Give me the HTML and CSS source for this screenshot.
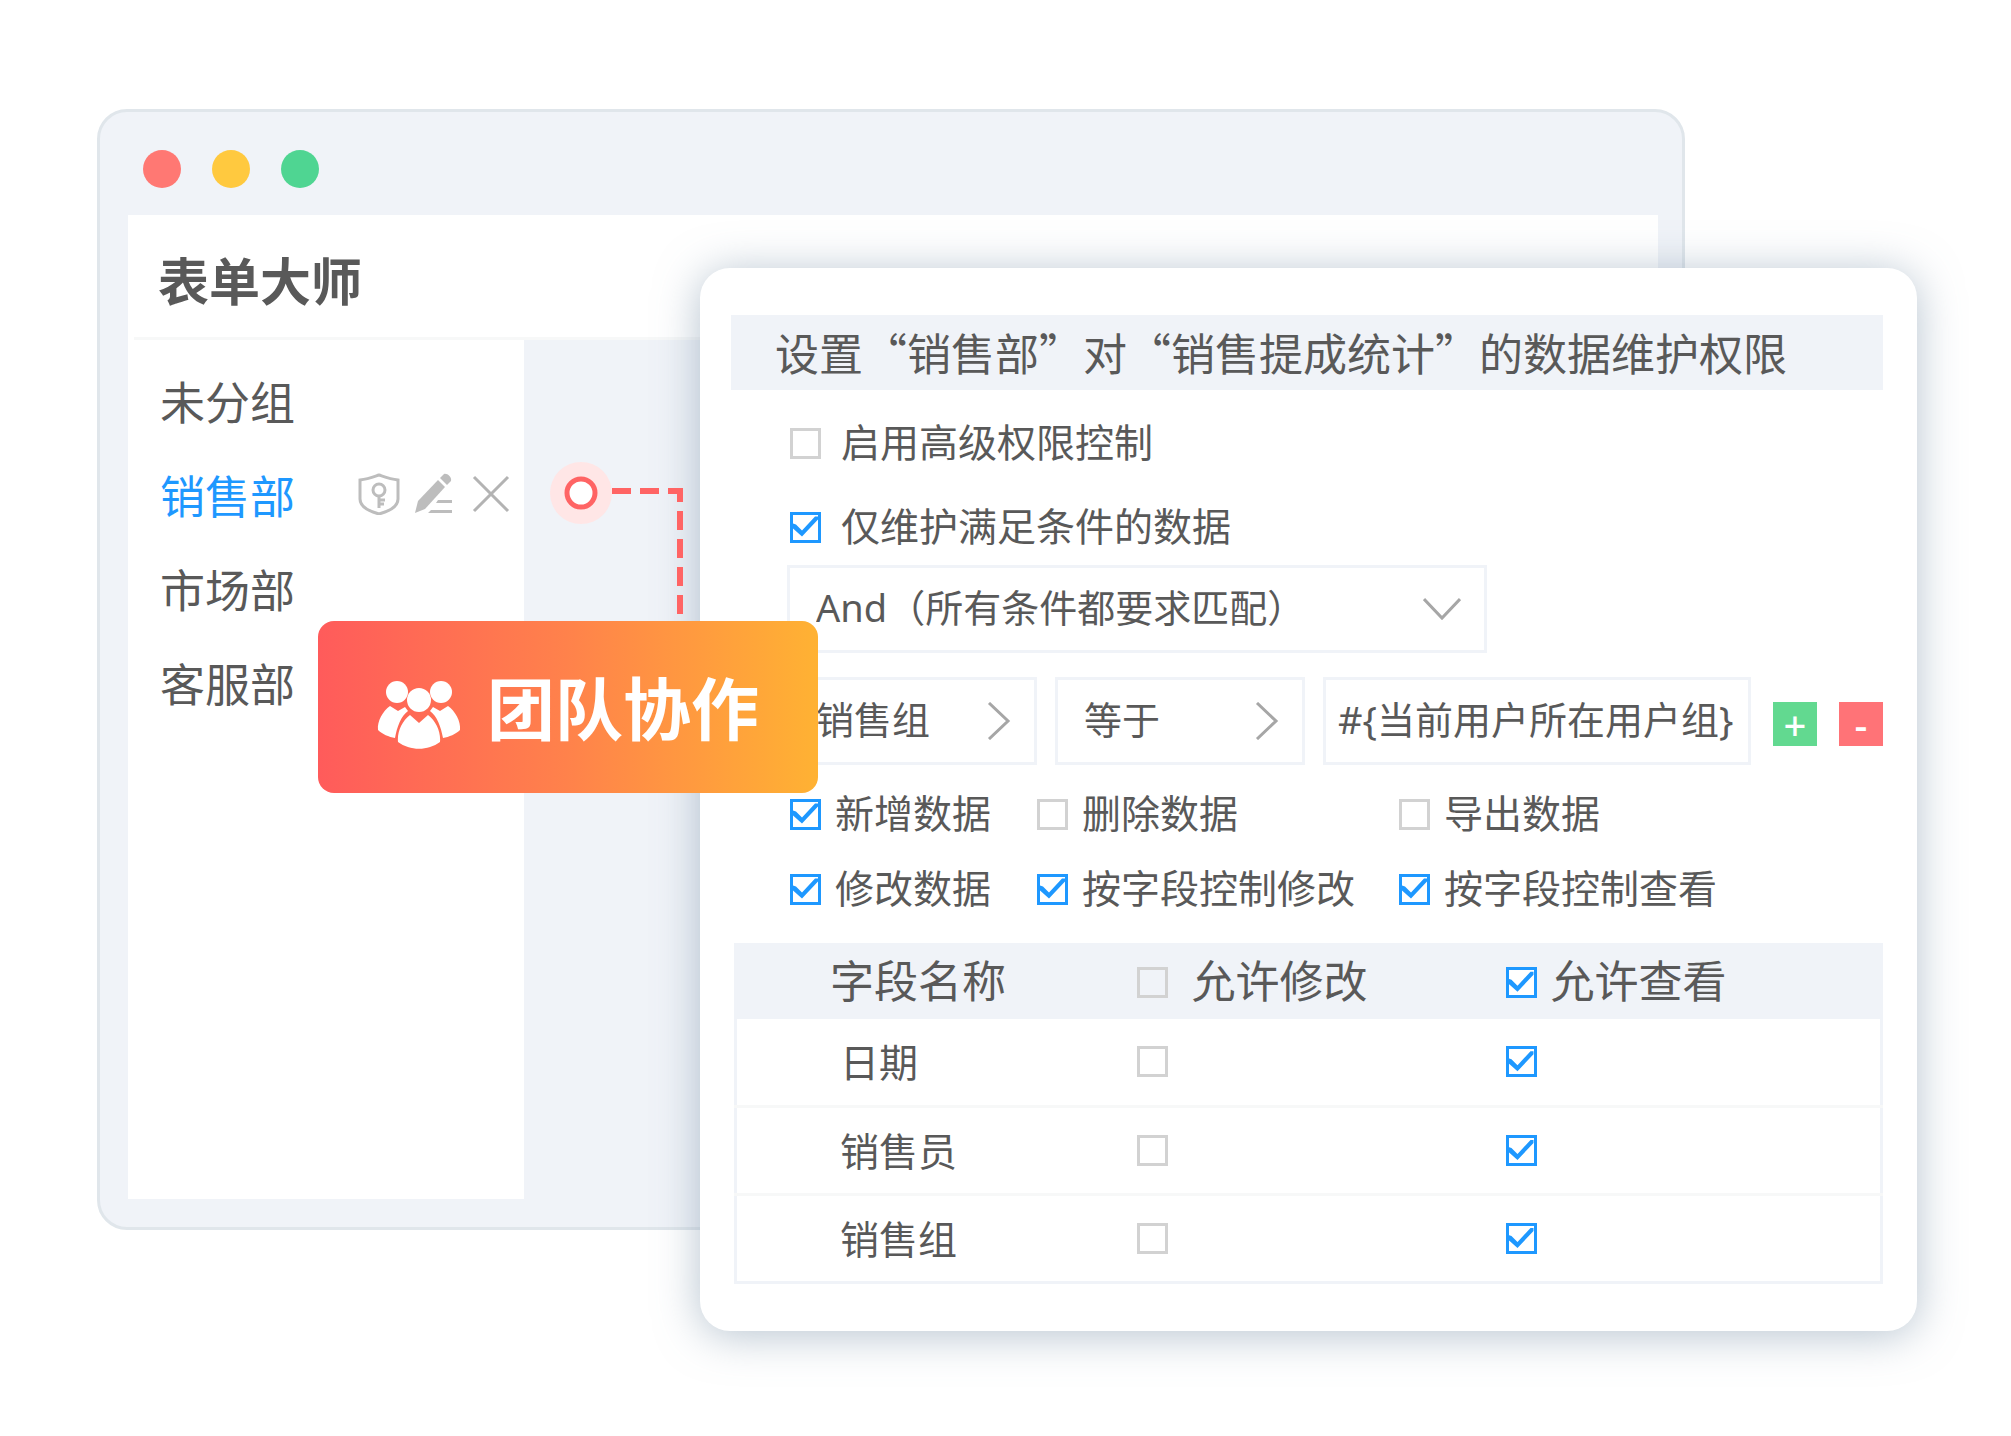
FILE: index.html
```html
<!DOCTYPE html>
<html lang="zh-CN">
<head>
  <meta charset="UTF-8">
  <title>表单大师</title>
  <meta name="viewport" content="width=device-width, initial-scale=1.0">
  <link rel="stylesheet" href="styles.css">
</head>
<body>
  <div class="stage">

    <!-- 后面的窗口 -->
    <div class="window">
      <div class="title-bar">
        <span class="dot red"></span>
        <span class="dot yellow"></span>
        <span class="dot green"></span>
      </div>
      <header class="app-header">
        <h1>表单大师</h1>
      </header>
      <nav class="sidebar">
        <div class="group"><a href="#">未分组</a></div>
        <div class="group active">
          <a href="#">销售部</a>
          <div class="tools">
            <button type="button" aria-label="权限">
              <svg viewBox="0 0 42 42" fill="none" stroke="#bdbdbd" stroke-width="3">
                <path d="M2 7C10 6 15 4 21 2c6 2 11 4 19 5v19c0 7-8 12-19 15C10 38 2 33 2 26z"/>
                <circle cx="21" cy="17" r="6"/>
                <path d="M21 23v12M21 27h6M21 31h5"/>
              </svg>
            </button>
            <button type="button" aria-label="编辑">
              <svg viewBox="0 0 42 42" fill="#bdbdbd">
                <path d="M1 40l3-12L24 7l7 7-20 22z"/>
                <path d="M26 5l4-4c3-1 8 3 7 7l-4 4z"/>
                <path d="M24 27h14v3H22zM17 37h21v3H14z"/>
              </svg>
            </button>
            <button type="button" aria-label="删除">
              <svg viewBox="0 0 42 42" fill="none" stroke="#b3b3b3" stroke-width="3">
                <path d="M4 4l34 34M38 4L4 38"/>
              </svg>
            </button>
          </div>
        </div>
        <div class="group"><a href="#">市场部</a></div>
        <div class="group"><a href="#">客服部</a></div>
      </nav>
    </div>

    <!-- 权限设置卡片 -->
    <div class="card">
      <h2>设置“销售部”对“销售提成统计”的数据维护权限</h2>

      <form class="settings">
        <label class="check wide"><input type="checkbox">启用高级权限控制</label>
        <label class="check wide"><input type="checkbox" checked>仅维护满足条件的数据</label>

        <div class="select match">
          <select aria-label="匹配方式">
            <option>And（所有条件都要求匹配）</option>
          </select>
          <svg class="arrow-down" viewBox="0 0 38 24"><path d="M1 2l18 19L37 2"/></svg>
        </div>

        <div class="condition">
          <div class="select">
            <select aria-label="字段">
              <option>销售组</option>
            </select>
            <svg class="arrow-right" viewBox="0 0 24 38"><path d="M2 1l19 18L2 37"/></svg>
          </div>
          <div class="select">
            <select aria-label="运算符">
              <option>等于</option>
            </select>
            <svg class="arrow-right" viewBox="0 0 24 38"><path d="M2 1l19 18L2 37"/></svg>
          </div>
          <input class="value" type="text" aria-label="值" value="#{当前用户所在用户组}">
          <button class="square add" type="button">+</button>
          <button class="square remove" type="button">-</button>
        </div>

        <div class="options">
          <label class="check"><input type="checkbox" checked>新增数据</label>
          <label class="check"><input type="checkbox">删除数据</label>
          <label class="check"><input type="checkbox">导出数据</label>
          <label class="check"><input type="checkbox" checked>修改数据</label>
          <label class="check"><input type="checkbox" checked>按字段控制修改</label>
          <label class="check"><input type="checkbox" checked>按字段控制查看</label>
        </div>
      </form>

      <table class="fields">
        <thead>
          <tr>
            <th>字段名称</th>
            <th><label class="check edit"><input type="checkbox">允许修改</label></th>
            <th><label class="check"><input type="checkbox" checked>允许查看</label></th>
          </tr>
        </thead>
        <tbody>
          <tr>
            <td>日期</td>
            <td><input type="checkbox" aria-label="日期 允许修改"></td>
            <td><input type="checkbox" aria-label="日期 允许查看" checked></td>
          </tr>
          <tr>
            <td>销售员</td>
            <td><input type="checkbox" aria-label="销售员 允许修改"></td>
            <td><input type="checkbox" aria-label="销售员 允许查看" checked></td>
          </tr>
          <tr>
            <td>销售组</td>
            <td><input type="checkbox" aria-label="销售组 允许修改"></td>
            <td><input type="checkbox" aria-label="销售组 允许查看" checked></td>
          </tr>
        </tbody>
      </table>
    </div>

    <!-- 连接虚线 -->
    <svg class="connector" viewBox="0 0 134 160" fill="none" stroke="#ff6464" stroke-width="6">
      <circle cx="31" cy="31" r="31" fill="#ffe6e6" stroke="none"/>
      <circle cx="31" cy="31" r="14" fill="#fff" stroke-width="5"/>
      <path d="M62 29h48" stroke-dasharray="19 9"/>
      <path d="M118 29h12v11"/>
      <path d="M130 49v105" stroke-dasharray="19 9"/>
    </svg>

    <div class="badge">
      <svg viewBox="0 0 84 70" fill="#fff">
        <circle cx="20" cy="12" r="11"/>
        <circle cx="64" cy="12" r="11"/>
        <circle cx="42" cy="20" r="12"/>
        <path d="M13 26l8 5 7-4 3 4c-7 5-11 16-13 27C12 57 5 54 1 50c-1-9 5-19 12-24z"/>
        <path d="M71 26l-8 5-7-4-3 4c7 5 11 16 13 27 6-1 13-4 17-8 1-9-5-19-12-24z"/>
        <path d="M33 35l9 8 9-8c8 6 13 17 12 27-12 9-30 9-42 0-1-10 4-21 12-27z"/>
      </svg>
      团队协作
    </div>
  </div>
</body>
</html>
```
FILE: styles.css
```css
* {
  box-sizing: border-box;
}
body {
  margin: 0;
  background: #fff;
  color: #595959;
  font-family: "Noto Sans CJK SC", "Noto Sans", sans-serif;
}
h1, h2 {
  margin: 0;
}
button {
  padding: 0;
  border: none;
  background: none;
  cursor: pointer;
}
.stage {
  position: relative;
  min-height: 100vh;
  padding: 109px 326px 0 97px;
}

/* 窗口 */
.window {
  padding: 0 24px 28px 28px;
  background: #f0f3f8;
  border: 3px solid #e0e6eb;
  border-radius: 30px;
}
.title-bar {
  display: flex;
  gap: 31px;
  padding: 38px 0 27px 15px;
}
.dot {
  width: 38px;
  height: 38px;
  border-radius: 50%;
}
.red { background: #ff7873; }
.yellow { background: #ffc93f; }
.green { background: #4fd592; }

.app-header {
  padding-left: 6px;
  background: #fff;
}
.app-header h1 {
  padding: 6px 0 0 24px;
  border-bottom: 3px solid #f7f8f8;
  font-size: 51px;
  line-height: 116px;
}
.sidebar {
  width: 396px;
  min-height: 859px;
  padding: 13px 12px 0 32px;
  background: #fff;
}
.group {
  display: flex;
  align-items: center;
  justify-content: space-between;
  height: 94px;
  font-size: 45px;
}
.group a {
  color: inherit;
  text-decoration: none;
}
.group.active a {
  color: #1e98ff;
}
.tools {
  display: flex;
  gap: 14px;
}
.tools svg {
  display: block;
  width: 42px;
  height: 42px;
}

/* 卡片 */
.card {
  position: absolute;
  top: 268px;
  left: 700px;
  right: 94px;
  padding: 47px 34px 47px 31px;
  background: #fff;
  border-radius: 30px;
  box-shadow: 0 4px 44px rgba(110, 135, 160, 0.5);
}
.card h2 {
  padding-left: 44px;
  background: #f0f3f8;
  font-size: 44px;
  font-weight: normal;
  line-height: 74px;
  padding-bottom: 1px;
  white-space: nowrap;
}
.settings {
  padding: 26px 0 33px 56px;
}
.check {
  display: flex;
  align-items: center;
  gap: 14px;
  padding-left: 3px;
  font-size: 39px;
  line-height: 48px;
  white-space: nowrap;
}
.check input {
  position: relative;
  top: 3px;
}
.check.wide {
  gap: 20px;
}
.check.wide + .check.wide {
  margin-top: 36px;
}
input[type="checkbox"] {
  appearance: none;
  display: block;
  flex: none;
  width: 31px;
  height: 31px;
  margin: 0;
  border: 3px solid #d2d2d2;
}
input[type="checkbox"]:checked {
  border-color: #1e98ff;
  background: #fff;
}
input[type="checkbox"]:checked::before {
  content: "";
  display: block;
  height: 25px;
  background: #1e98ff;
  clip-path: polygon(0 9px, 3px 10px, 9px 16px, 22px 2px, 25px 2px, 25px 5px, 9px 22px, 0 14px);
}

.select {
  position: relative;
  width: 250px;
}
.select.match {
  width: 700px;
  margin: 17px 0 24px;
}
.select select,
.value {
  display: block;
  width: 100%;
  height: 88px;
  padding: 0 26px 4px;
  border: 3px solid #f0f3f8;
  border-radius: 0;
  background: #fff;
  color: inherit;
  font-family: "Noto Sans", "Noto Sans CJK SC", sans-serif;
  font-size: 38px;
}
.select select {
  appearance: none;
}
.select svg {
  position: absolute;
  top: 50%;
  right: 26px;
  transform: translateY(-50%);
  fill: none;
  stroke: #a6a6a6;
  stroke-width: 3;
  pointer-events: none;
}
.arrow-down {
  width: 38px;
  height: 24px;
}
.arrow-right {
  width: 24px;
  height: 38px;
}
.condition {
  display: flex;
  align-items: center;
  gap: 18px;
}
.condition .value {
  flex: 1;
  min-width: 0;
  padding: 0 12px 8px;
}
.square {
  width: 44px;
  height: 44px;
  margin: 6px 0 0 4px;
  color: #fff;
  font: 500 40px/46px "Noto Sans", sans-serif;
}
.add { background: #62d990; }
.remove { background: #ff7377; }

.options {
  display: grid;
  grid-template-columns: 247px 362px auto;
  row-gap: 27px;
  margin-top: 22px;
}

.fields {
  width: calc(100% - 3px);
  margin-left: 3px;
  border-collapse: collapse;
  table-layout: fixed;
  border: 3px solid #f0f3f8;
}
.fields th {
  height: 74px;
  padding: 0 0 6px;
  background: #f0f3f8;
  font-size: 44px;
  font-weight: normal;
  line-height: 48px;
  text-align: left;
}
.fields th:first-child {
  width: 35%;
  padding-left: 93px;
}
.fields th:nth-child(3) {
  width: 376px;
}
.fields th .check {
  padding: 0;
  font-size: 44px;
}
.fields th .edit {
  gap: 24px;
}
.fields td {
  height: 88px;
  padding: 0;
  border-bottom: 3px solid #f7f8f8;
  font-size: 39px;
  line-height: 48px;
}
.fields td:first-child {
  padding: 0 0 4px 103px;
}
.fields tr:last-child td {
  border-bottom-color: #f0f3f8;
}

/* 浮层 */
.connector {
  position: absolute;
  top: 462px;
  left: 550px;
  width: 134px;
  height: 160px;
}
.badge {
  position: absolute;
  top: 621px;
  left: 318px;
  display: flex;
  align-items: center;
  gap: 26px;
  width: 500px;
  height: 172px;
  padding: 0 0 4px 59px;
  border-radius: 16px;
  background: linear-gradient(90deg, #ff5b5b, #ff824b 50%, #ffb233);
  color: #fff;
  font-size: 68px;
  font-weight: bold;
  white-space: nowrap;
}
.badge svg {
  flex: none;
  width: 84px;
  height: 70px;
  margin-top: 20px;
}
```
